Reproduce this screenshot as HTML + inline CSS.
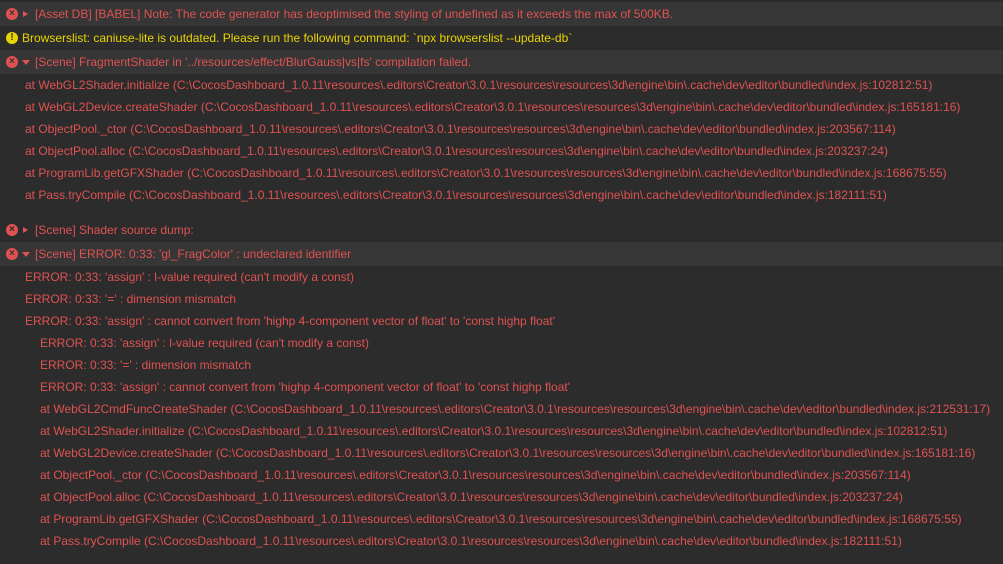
<!DOCTYPE html>
<html><head><style>
body{margin:0;width:1003px;height:564px;background:#2c2c2c;font-family:"Liberation Sans",sans-serif;font-size:12px;color:#e05252;overflow:hidden}
.r{position:absolute;left:0;width:1003px;white-space:nowrap;line-height:22px;height:22px}
.h{height:24px;line-height:24px;background:#363636}
.ic{position:absolute;left:6px;top:6px;width:12px;height:12px;border-radius:50%;background:#e05252;color:#363636;font-size:10px;line-height:12px;text-align:center;font-weight:bold}
.w .ic{background:#e8d400;color:#363636}
.tr{position:absolute;left:23px;top:9px;width:0;height:0;border-top:3.5px solid transparent;border-bottom:3.5px solid transparent;border-left:5px solid #e05252}
.td{position:absolute;left:22px;top:10px;width:0;height:0;border-left:4px solid transparent;border-right:4px solid transparent;border-top:5px solid #e05252}
.t{position:absolute;left:35px}
.s{padding-left:25px}
.s2{padding-left:40px}
.w{color:#e8d400}
</style></head><body>
<div class="r h" style="top:2px"><span class="ic">×</span><span class="tr"></span><span class="t">[Asset DB] [BABEL] Note: The code generator has deoptimised the styling of undefined as it exceeds the max of 500KB.</span></div>
<div class="r h w" style="top:26px;background:#2c2c2c"><span class="ic">!</span><span style="position:absolute;left:22px">Browserslist: caniuse-lite is outdated. Please run the following command: `npx browserslist --update-db`</span></div>
<div class="r h" style="top:50px"><span class="ic">×</span><span class="td"></span><span class="t">[Scene] FragmentShader in '../resources/effect/BlurGauss|vs|fs' compilation failed.</span></div>
<div class="r s" style="top:74px">at WebGL2Shader.initialize (C:\CocosDashboard_1.0.11\resources\.editors\Creator\3.0.1\resources\resources\3d\engine\bin\.cache\dev\editor\bundled\index.js:102812:51)</div>
<div class="r s" style="top:96px">at WebGL2Device.createShader (C:\CocosDashboard_1.0.11\resources\.editors\Creator\3.0.1\resources\resources\3d\engine\bin\.cache\dev\editor\bundled\index.js:165181:16)</div>
<div class="r s" style="top:118px">at ObjectPool._ctor (C:\CocosDashboard_1.0.11\resources\.editors\Creator\3.0.1\resources\resources\3d\engine\bin\.cache\dev\editor\bundled\index.js:203567:114)</div>
<div class="r s" style="top:140px">at ObjectPool.alloc (C:\CocosDashboard_1.0.11\resources\.editors\Creator\3.0.1\resources\resources\3d\engine\bin\.cache\dev\editor\bundled\index.js:203237:24)</div>
<div class="r s" style="top:162px">at ProgramLib.getGFXShader (C:\CocosDashboard_1.0.11\resources\.editors\Creator\3.0.1\resources\resources\3d\engine\bin\.cache\dev\editor\bundled\index.js:168675:55)</div>
<div class="r s" style="top:184px">at Pass.tryCompile (C:\CocosDashboard_1.0.11\resources\.editors\Creator\3.0.1\resources\resources\3d\engine\bin\.cache\dev\editor\bundled\index.js:182111:51)</div>
<div class="r h" style="top:218px;background:#2c2c2c"><span class="ic" style="color:#2c2c2c">×</span><span class="tr"></span><span class="t">[Scene] Shader source dump:</span></div>
<div class="r h" style="top:242px"><span class="ic">×</span><span class="td"></span><span class="t">[Scene] ERROR: 0:33: 'gl_FragColor' : undeclared identifier</span></div>
<div class="r s" style="top:266px">ERROR: 0:33: 'assign' : l-value required (can't modify a const)</div>
<div class="r s" style="top:288px">ERROR: 0:33: '=' : dimension mismatch</div>
<div class="r s" style="top:310px">ERROR: 0:33: 'assign' : cannot convert from 'highp 4-component vector of float' to 'const highp float'</div>
<div class="r s2" style="top:332px">ERROR: 0:33: 'assign' : l-value required (can't modify a const)</div>
<div class="r s2" style="top:354px">ERROR: 0:33: '=' : dimension mismatch</div>
<div class="r s2" style="top:376px">ERROR: 0:33: 'assign' : cannot convert from 'highp 4-component vector of float' to 'const highp float'</div>
<div class="r s2" style="top:398px">at WebGL2CmdFuncCreateShader (C:\CocosDashboard_1.0.11\resources\.editors\Creator\3.0.1\resources\resources\3d\engine\bin\.cache\dev\editor\bundled\index.js:212531:17)</div>
<div class="r s2" style="top:420px">at WebGL2Shader.initialize (C:\CocosDashboard_1.0.11\resources\.editors\Creator\3.0.1\resources\resources\3d\engine\bin\.cache\dev\editor\bundled\index.js:102812:51)</div>
<div class="r s2" style="top:442px">at WebGL2Device.createShader (C:\CocosDashboard_1.0.11\resources\.editors\Creator\3.0.1\resources\resources\3d\engine\bin\.cache\dev\editor\bundled\index.js:165181:16)</div>
<div class="r s2" style="top:464px">at ObjectPool._ctor (C:\CocosDashboard_1.0.11\resources\.editors\Creator\3.0.1\resources\resources\3d\engine\bin\.cache\dev\editor\bundled\index.js:203567:114)</div>
<div class="r s2" style="top:486px">at ObjectPool.alloc (C:\CocosDashboard_1.0.11\resources\.editors\Creator\3.0.1\resources\resources\3d\engine\bin\.cache\dev\editor\bundled\index.js:203237:24)</div>
<div class="r s2" style="top:508px">at ProgramLib.getGFXShader (C:\CocosDashboard_1.0.11\resources\.editors\Creator\3.0.1\resources\resources\3d\engine\bin\.cache\dev\editor\bundled\index.js:168675:55)</div>
<div class="r s2" style="top:530px">at Pass.tryCompile (C:\CocosDashboard_1.0.11\resources\.editors\Creator\3.0.1\resources\resources\3d\engine\bin\.cache\dev\editor\bundled\index.js:182111:51)</div>
</body></html>
